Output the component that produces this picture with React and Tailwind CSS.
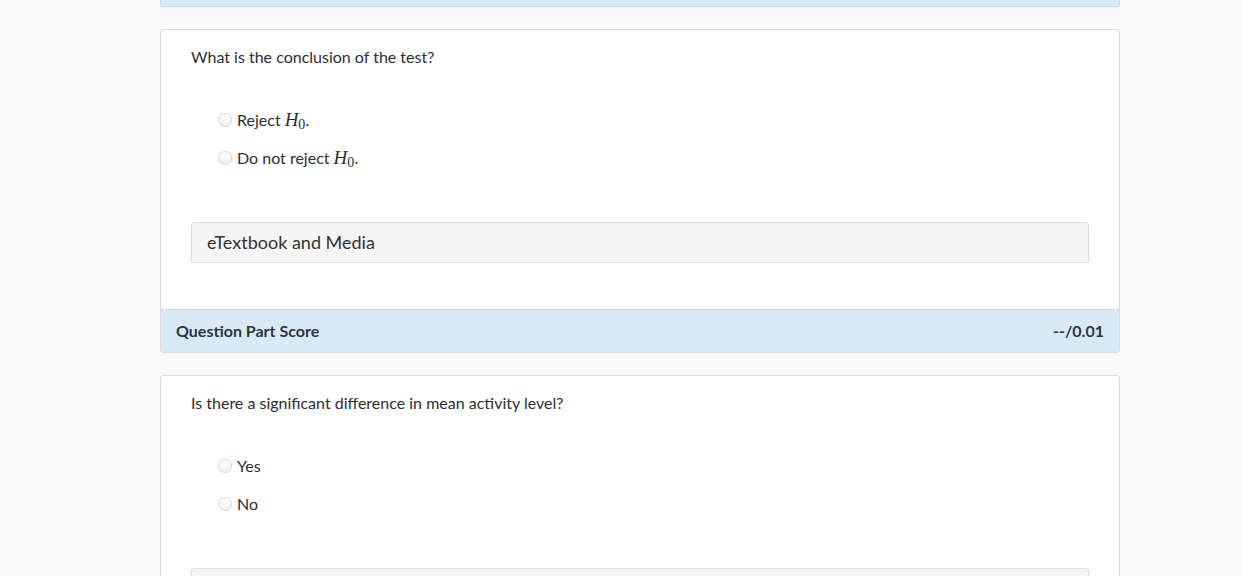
import React from "react";

const H0 = () => (
    <span className="ml-1" style={{ fontFamily: "'Liberation Serif', serif" }}>
        <span className="italic text-[19px]">H</span>
        <span className="text-[14px] relative top-[3px]">0</span>
        <span className="text-[17px]">.</span>
    </span>
);

const Radio = ({ children }) => (
    <label className="flex items-center h-[38px] cursor-pointer">
        <span className="w-[14px] h-[14px] ml-[1px] rounded-full border border-[#d2d2d2] bg-gradient-to-b from-white to-[#f0f0f0] mr-[5px] shrink-0" />
        <span className="text-[16px] text-[#2e2e2e]">{children}</span>
    </label>
);

const ScoreBar = () => (
    <div className="flex items-center justify-between h-[43px] px-[15px] bg-[#daeaf5] border-t border-[#cadbe8]">
        <span className="font-bold text-[16px] text-[#2b3540]">Question Part Score</span>
        <span className="font-bold text-[16px] text-[#2b3540]">--/0.01</span>
    </div>
);

const Question = ({ text, options }) => (
    <div className="bg-white border border-[#dcdcdc] rounded-[3px] overflow-hidden">
        <div className="px-[30px] pt-[15px] pb-[46px]">
            <div className="text-[16px] leading-[24px] text-[#2e2e2e]">{text}</div>
            <div className="mt-[32px] pl-[26px]">
                {options.map((o, i) => (
                    <Radio key={i}>{o}</Radio>
                ))}
            </div>
            <div className="mt-[45px] h-[41px] flex items-center px-[15px] bg-[#f5f5f5] border border-[#dcdcdc] rounded-[3px] text-[18px] text-[#333]">
                eTextbook and Media
            </div>
        </div>
        <ScoreBar />
    </div>
);

export default function App() {
    return (
        <div className="min-h-screen bg-[#fafafa] overflow-hidden" style={{ fontFamily: "Lato, 'Liberation Sans', sans-serif" }}>
            <div className="w-[960px] ml-[160px] flex flex-col gap-[22px]">
                <div className="h-[7px] bg-[#daeaf5] border border-t-0 border-[#cadbe8] rounded-b-[3px]" />
                <Question
                    text="What is the conclusion of the test?"
                    options={[
                        <>Reject<H0 /></>,
                        <>Do not reject<H0 /></>,
                    ]}
                />
                <Question
                    text="Is there a significant difference in mean activity level?"
                    options={["Yes", "No"]}
                />
            </div>
        </div>
    );
}
